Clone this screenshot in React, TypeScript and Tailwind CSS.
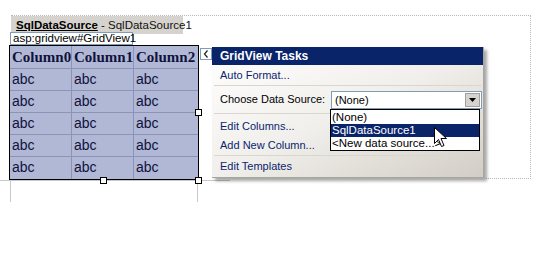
import React from "react";

const rows = [0, 1, 2, 3, 4];

const Handle = ({ className }: { className: string }) => (
  <div className={`absolute w-[7px] h-[7px] bg-white border border-black ${className}`} />
);

const Cursor = () => (
  <svg width="13" height="21" viewBox="0 0 13 21" className="absolute left-[434px] top-[127px]">
    <path d="M0.5 0.5 L0.5 16.5 L4.5 12.5 L7.5 19.5 L10 18.5 L7 11.5 L12.5 11.5 Z" fill="white" stroke="black" strokeWidth="1" />
  </svg>
);

export default function App() {
  return (
    <div className="relative w-[540px] h-[272px] bg-white overflow-hidden font-['Liberation_Sans',sans-serif]">
      {/* dotted outline of the data source control */}
      <div className="absolute left-[11px] top-[15px] w-[520px] h-[164px] border-t border-r border-dotted border-[#b8b8b8]" />
      <div className="absolute left-[486px] top-[178px] w-[45px] h-px border-t border-dotted border-[#b8b8b8]" />

      {/* designer surface */}
      <div className="relative pl-[11px] pt-[16px]">
        <div className="w-[172px] h-[18px] bg-[#d6d3ce] pl-[5px] pt-[2px] text-[11.5px] leading-[14px] text-black whitespace-nowrap">
          <span className="font-bold underline">SqlDataSource</span>
          <span className="text-[#111]"> - SqlDataSource1</span>
        </div>
        <div className="relative -mt-[2px] -ml-[1px] w-[123px] h-[13px] bg-white border border-[#7f9db9] text-[11.5px] leading-[11px] pl-[2px] text-black whitespace-nowrap">
          asp:gridview#GridView1
        </div>

        <div className="relative -ml-[2px] w-[190px] border-[1.5px] border-black bg-[#b0b8d6]">
          <div className="grid grid-cols-[62px_62px_63px] h-[23px] border-b border-[#8b94b8] font-['Liberation_Serif',serif] font-bold text-[15px] leading-[22px] text-[#10123c] whitespace-nowrap">
            <div className="pl-[2px] border-r border-[#8b94b8]">Column0</div>
            <div className="pl-[2px] border-r border-[#8b94b8]">Column1</div>
            <div className="pl-[2px]">Column2</div>
          </div>
          {rows.map((r) => (
            <div
              key={r}
              className={`grid grid-cols-[62px_62px_63px] h-[22px] text-[14px] leading-[21px] text-[#10123c] ${r < 4 ? "border-b border-[#8b94b8]" : ""}`}
            >
              <div className="pl-[2px] border-r border-[#8b94b8]">abc</div>
              <div className="pl-[2px] border-r border-[#8b94b8]">abc</div>
              <div className="pl-[2px]">abc</div>
            </div>
          ))}
        </div>
        <div className="h-[22px] -ml-[11px] w-[230px] border-t border-[#c8c8c8] flex">
          <div className="ml-[10px] w-[188px] border-x border-[#c8c8c8]" />
        </div>
      </div>

      <Handle className="left-[195px] top-[109px]" />
      <Handle className="left-[100px] top-[177px]" />
      <Handle className="left-[195px] top-[177px]" />

      {/* smart tag button */}
      <div className="absolute left-[200px] top-[48px] w-[12px] h-[12px] bg-white border border-[#7f9db9] flex items-center justify-center">
        <svg width="6" height="8" viewBox="0 0 6 8">
          <path d="M4.5 0.5 L1.5 4 L4.5 7.5" fill="none" stroke="#222" strokeWidth="1.2" />
        </svg>
      </div>

      {/* tasks panel */}
      <div className="absolute left-[212px] top-[47px] w-[272px] h-[131px] bg-gradient-to-br from-white via-[#f1efeb] to-[#d2cec6] border-r border-b border-[#a9a69f] shadow-[3px_3px_3px_rgba(0,0,0,0.35)] text-[11px] text-[#0b1f6e] whitespace-nowrap">
        <div className="h-[18px] bg-[#0a246a] text-white font-bold pl-[8px] leading-[18px] text-[12px]">GridView Tasks</div>
        <div className="h-[20px] pl-[8px] leading-[20px]">Auto Format...</div>
        <div className="mx-[2px] h-px bg-[#d9d6cf]" />
        <div className="h-[27px] flex items-center pl-[8px] text-black">
          <span className="w-[111px]">Choose Data Source:</span>
          <div className="w-[151px] h-[18px] bg-white border border-[#7f9db9] flex items-center justify-between">
            <span className="pl-[3px] leading-[16px]">(None)</span>
            <div className="w-[15px] h-[14px] mr-px bg-[#d6d3ce] border border-[#a0a0a0] flex items-center justify-center">
              <svg width="7" height="4" viewBox="0 0 7 4">
                <path d="M0 0 L7 0 L3.5 4 Z" fill="#000" />
              </svg>
            </div>
          </div>
        </div>
        <div className="mx-[2px] h-px bg-[#d9d6cf]" />
        <div className="h-[21px] pl-[8px] leading-[24px]">Edit Columns...</div>
        <div className="h-[20px] pl-[8px] leading-[20px]">Add New Column...</div>
        <div className="mx-[2px] h-px bg-[#d9d6cf]" />
        <div className="h-[20px] pl-[8px] leading-[20px]">Edit Templates</div>
      </div>

      {/* open dropdown list */}
      <div className="absolute left-[330px] top-[109px] w-[150px] h-[42px] bg-white border border-black text-[11.5px] text-black leading-[13px] pt-px whitespace-nowrap">
        <div className="pl-px h-[13px]">(None)</div>
        <div className="pl-px h-[13px] bg-[#0a246a] text-white">SqlDataSource1</div>
        <div className="pl-px h-[13px]">&lt;New data source...&gt;</div>
      </div>

      <Cursor />
    </div>
  );
}
